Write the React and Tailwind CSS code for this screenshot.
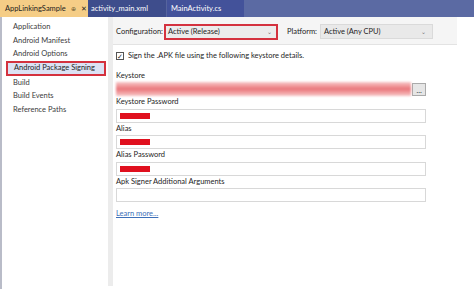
import React from 'react';

const navItems = [
  'Application',
  'Android Manifest',
  'Android Options',
  'Android Package Signing',
  'Build',
  'Build Events',
  'Reference Paths',
];

const Field = ({ label, children }) => (
  <div>
    <div className="h-[12.5px] leading-[12.5px]">{label}</div>
    {children}
  </div>
);

const RedMark = () => <div className="ml-[3px] mt-[3px] h-[6px] w-[30px] bg-[#e0101e]" />;

const App = () => {
  return (
    <div
      className="w-[474px] h-[289px] bg-white overflow-hidden text-[7.5px] text-[#1e1e1e] flex flex-col whitespace-nowrap"
      style={{ fontFamily: 'Lato, "Noto Sans", sans-serif' }}
    >
      {/* Tabs */}
      <div className="flex h-[17px] bg-[#5b6aa3] shrink-0">
        <div className="flex items-center gap-[5px] bg-[#f5cd86] pl-[5px] pr-[4px] text-[#1e1e1e] w-[88px]">
          <span>AppLinkingSample</span>
          <span className="text-[6px] text-[#6b5a30]">⊕</span>
          <span className="text-[6.5px]">✕</span>
        </div>
        <div className="flex items-center bg-[#3e4d8c] px-[3px] w-[78px] text-white">activity_main.xml</div>
        <div className="flex items-center bg-[#43529a] pl-[4px] w-[78px] text-white border-l border-[#56649e]">MainActivity.cs</div>
        <div className="flex-1" />
      </div>

      <div className="flex flex-1 min-h-0">
        {/* Sidebar */}
        <div className="w-[108px] border-l-2 border-[#b9bcc8] pt-[3px] shrink-0 flex flex-col">
          {navItems.map((n) => (
            <div
              key={n}
              className={
                n === 'Android Package Signing'
                  ? 'ml-[4px] mr-[2px] h-[15px] pl-[6px] flex items-center bg-[#dce2f4] border-2 border-[#d4323f] text-[#1e1e1e]'
                  : 'h-[13.5px] pl-[11px] flex items-center text-[#3c3c3c]'
              }
            >
              {n}
            </div>
          ))}
        </div>
        <div className="w-[5px] bg-[#ececec] mb-[3px] shrink-0" />

        {/* Content */}
        <div className="flex-1 flex flex-col">
          <div className="h-[28px] bg-[#f5f5f5] border-b border-[#e3e3e3] flex items-center pl-[3px] pt-[2px] mr-[17px]">
            <span>Configuration:</span>
            <div className="ml-[1px] w-[114px] h-[16px] border-2 border-[#d4323f] bg-[#ececec] flex items-center justify-between pl-[2px] pr-[4px]">
              <span>Active (Release)</span>
              <span className="text-[6px] text-[#777]">⌄</span>
            </div>
            <span className="ml-[9px]">Platform:</span>
            <div className="ml-[3px] w-[113px] h-[15px] border border-[#dadada] bg-[#e9e9e9] flex items-center justify-between pl-[3px] pr-[6px]">
              <span>Active (Any CPU)</span>
              <span className="text-[6px] text-[#777]">⌄</span>
            </div>
          </div>

          <div className="pl-[3px] pr-[48px] pt-[5px]">
            <div className="flex items-center gap-[4px] h-[12px]">
              <div className="w-[8px] h-[8px] border border-[#555] bg-white flex items-center justify-center text-[7px] leading-none">✓</div>
              <span>Sign the .APK file using the following keystore details.</span>
            </div>

            <div className="mt-[7px] h-[13px] leading-[13px]">Keystore</div>
            <div className="flex items-center">
              <div className="flex-1 h-[14px] bg-gradient-to-b from-[#f6c7c9] via-[#e9757b] to-[#f6c7c9] blur-[1px]" />
              <div className="w-[14px] h-[13px] border border-[#aaa] bg-[#e6e6e6] ml-[1px] flex items-end justify-center text-[7px] leading-[9px]">…</div>
            </div>

            <Field label="Keystore Password">
              <div className="h-[14px] border border-[#d8d8d8] bg-white"><RedMark /></div>
            </Field>
            <Field label="Alias">
              <div className="h-[14px] border border-[#d8d8d8] bg-white"><RedMark /></div>
            </Field>
            <Field label="Alias Password">
              <div className="h-[14px] border border-[#d8d8d8] bg-white"><RedMark /></div>
            </Field>
            <Field label="Apk Signer Additional Arguments">
              <div className="h-[14px] border border-[#d8d8d8] bg-white" />
            </Field>

            <div className="mt-[6px] text-[#3d6fb8] underline">Learn more...</div>
          </div>
        </div>
      </div>
    </div>
  );
};

export default App;
